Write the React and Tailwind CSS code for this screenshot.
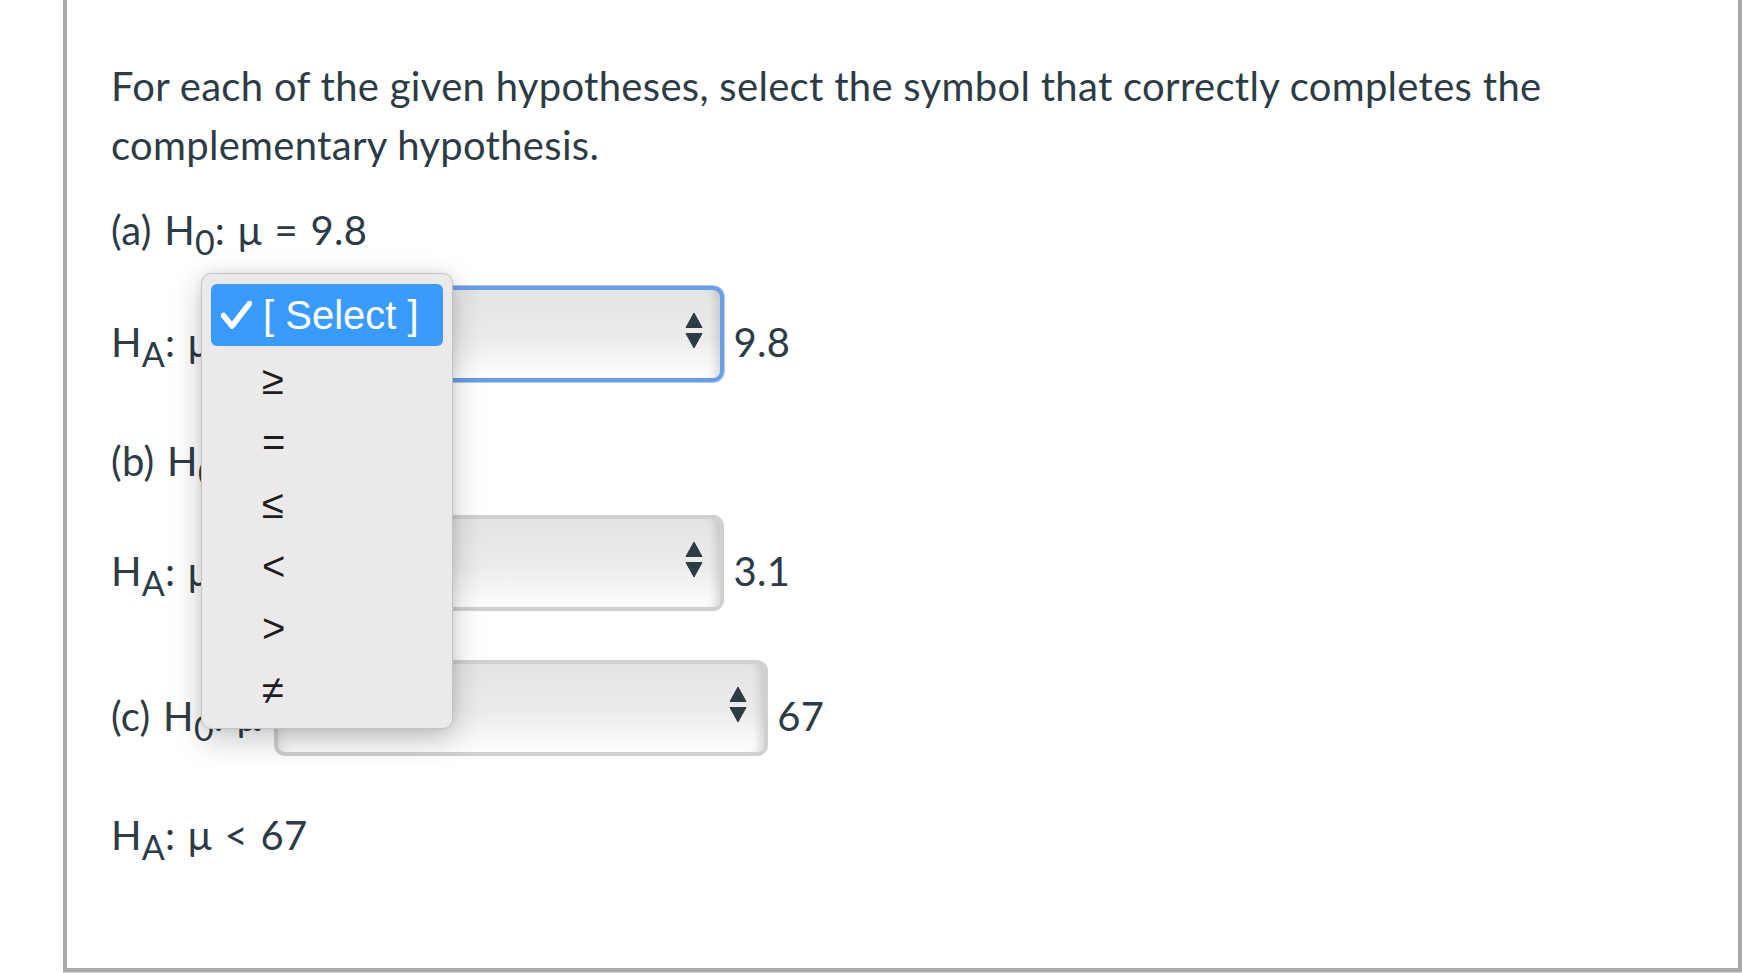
import React from "react";

function Arrows() {
  return (
    <svg
      className="absolute top-[22px] right-[17px]"
      width="18"
      height="37"
      viewBox="0 0 18 37"
    >
      <path d="M1 15.5 L9 1 L17 15.5 Z" fill="#2d3b45" stroke="#2d3b45" strokeWidth="1" strokeLinejoin="round" />
      <path d="M1 21.5 L17 21.5 L9 36 Z" fill="#2d3b45" stroke="#2d3b45" strokeWidth="1" strokeLinejoin="round" />
    </svg>
  );
}

function Sub({ children }) {
  return <sub className="text-[34px] bottom-[-10px] tracking-normal">{children}</sub>;
}

function Select({ focused }) {
  return (
    <div
      className={
        focused
          ? "relative h-[96px] w-[494px] shrink-0 rounded-[11px] border-[4px] border-[#6a9ee4] bg-linear-to-b from-[#e4e4e4] via-[#ececec] via-55% to-[#fefefe] shadow-[0_0_0_1px_rgba(106,158,228,0.55),inset_-12px_0_10px_-8px_rgba(0,0,0,0.14),inset_12px_0_10px_-8px_rgba(0,0,0,0.08)]"
          : "relative h-[96px] w-[494px] shrink-0 rounded-[11px] border-[4px] border-[#d0d0d0] bg-linear-to-b from-[#e4e4e4] via-[#ececec] via-55% to-[#fefefe] shadow-[inset_-12px_0_10px_-8px_rgba(0,0,0,0.14),inset_12px_0_10px_-8px_rgba(0,0,0,0.08)]"
      }
    >
      <span className="absolute left-[20px] top-[17px] font-['Liberation_Sans',Arial,sans-serif] text-[39px] leading-[44px] tracking-normal [word-spacing:0px] text-[#2d3b45]">
        [ Select ]
      </span>
      <Arrows />
    </div>
  );
}

function Menu() {
  const items = ["≥", "=", "≤", "<", ">", "≠"];
  return (
    <div className="absolute left-[201px] top-[273px] w-[252px] h-[456px] rounded-[10px] border border-[#c2c2c2] bg-[#ebe9ea] px-[9px] pt-[10px] font-['Liberation_Sans',Arial,sans-serif] text-[40px] shadow-[0_10px_32px_rgba(0,0,0,0.22),0_0_10px_rgba(0,0,0,0.08)]">
      <div className="relative flex h-[62px] items-center rounded-[6px] bg-[#3a9bfc] pl-[52px] text-white">
        <svg
          className="absolute left-[10px] top-[17px]"
          width="31"
          height="28"
          viewBox="0 0 31 28"
        >
          <path
            d="M2.5 14.5 L11 25 L28.5 2.5"
            fill="none"
            stroke="#ffffff"
            strokeWidth="5.5"
            strokeLinecap="round"
            strokeLinejoin="round"
          />
        </svg>
        <span className="leading-[44px]">[ Select ]</span>
      </div>
      {items.map((s) => (
        <div key={s} className="flex h-[62px] items-center pl-[51px] pt-[5px] text-[#1e1e1e]">
          <span className="leading-[44px]">{s}</span>
        </div>
      ))}
    </div>
  );
}

export default function App() {
  return (
    <div className="relative w-[1742px] h-[973px] overflow-hidden bg-white font-['Lato',sans-serif] text-[#2d3b45]">
      <div className="ml-[63px] h-[972px] border-l-[4px] border-r-[4px] border-b-[4px] border-[#a9a9a9] pl-[44px] pt-[57px] text-[40px] leading-[58.5px] tracking-[0.3px] shadow-[0_1px_0_#d6d6d6]">
        <p className="max-w-[1500px]">
          For each of the given hypotheses, select the symbol that correctly completes the complementary hypothesis.
        </p>

        <div className="[word-spacing:2px]">
          <p className="mt-[27px]">
            (a) H<Sub>0</Sub>: μ = 9.8
          </p>
          <div className="mt-[26px] flex h-[96px] items-start">
            <span className="mt-[27px] whitespace-pre">
              H<Sub>A</Sub>: μ{" "}
            </span>
            <div className="ml-[6px]">
              <Select focused />
            </div>
            <span className="ml-[9px] mt-[27px]">9.8</span>
          </div>

          <p className="mt-[50px]">
            (b) H<Sub>0</Sub>: μ ≤ 3.1
          </p>
          <div className="mt-[25px] flex h-[96px] items-start">
            <span className="mt-[27px] whitespace-pre">
              H<Sub>A</Sub>: μ{" "}
            </span>
            <div className="ml-[6px]">
              <Select />
            </div>
            <span className="ml-[9px] mt-[27px]">3.1</span>
          </div>

          <div className="mt-[49px] flex h-[96px] items-start">
            <span className="mt-[27px] whitespace-pre">
              (c) H<Sub>0</Sub>: μ{" "}
            </span>
            <div className="ml-[1px]">
              <Select />
            </div>
            <span className="ml-[9px] mt-[27px]">67</span>
          </div>

          <p className="mt-[50px]">
            H<Sub>A</Sub>: μ &lt; 67
          </p>
        </div>
      </div>
      <Menu />
    </div>
  );
}
